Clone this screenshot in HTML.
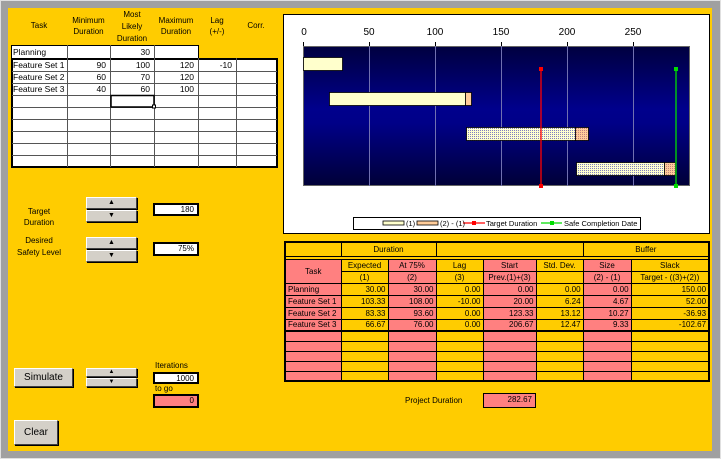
<!DOCTYPE html>
<html><head><style>
*{margin:0;padding:0;box-sizing:border-box}
body{width:721px;height:459px;background:#e0e0e0;position:relative;overflow:hidden;font-family:"Liberation Sans",sans-serif;font-size:8px;color:#000}
.a{position:absolute}
.c{text-align:center}
.r{text-align:right}
table{border-collapse:collapse;position:absolute;table-layout:fixed}
td{font-size:8px;line-height:9px;padding:0 2px;white-space:nowrap;overflow:hidden}
.btn{position:absolute;background:#d4d0c8;border:1px solid;border-color:#fff #404040 #404040 #fff;box-shadow:1px 1px 0 #000;font-size:10px;text-align:center}
.box{position:absolute;background:#fff;border:2px solid #000;text-align:right;font-size:8px;line-height:9px;padding-right:3px}
.p{background:#ff8080}
.e td{height:10px}
.dr{height:12px}
</style></head><body>
<div class="a" style="left:1px;top:1px;width:719px;height:457px;background:#a0a0a0"></div>
<div class="a" style="left:8px;top:8px;width:704px;height:443px;background:#ffcc00"></div>

<div class="a c" style="left:11px;top:21px;width:56px">Task</div>
<div class="a c" style="left:67px;top:15px;width:43px;line-height:11px">Minimum<br>Duration</div>
<div class="a c" style="left:110px;top:9px;width:44px;line-height:12px">Most<br>Likely<br>Duration</div>
<div class="a c" style="left:154px;top:15px;width:44px;line-height:11px">Maximum<br>Duration</div>
<div class="a c" style="left:198px;top:15px;width:38px;line-height:11px">Lag<br>(+/-)</div>
<div class="a c" style="left:236px;top:21px;width:40px">Corr.</div>

<div class="a" style="left:11px;top:45px;width:188px;height:14px;background:#fff;border:1px solid #000"></div>
<div class="a" style="left:11px;top:58px;width:267px;height:110px;background:#fff;border:2px solid #000"></div>
<svg class="a" style="left:0;top:0" width="300" height="180">
<g stroke="#555" stroke-width="1">
<line x1="67.5" y1="45" x2="67.5" y2="167"/><line x1="110.5" y1="45" x2="110.5" y2="167"/><line x1="154.5" y1="45" x2="154.5" y2="167"/><line x1="198.5" y1="58" x2="198.5" y2="167"/><line x1="236.5" y1="58" x2="236.5" y2="167"/>
<line x1="12" y1="71.5" x2="277" y2="71.5"/><line x1="12" y1="83.5" x2="277" y2="83.5"/><line x1="12" y1="95.5" x2="277" y2="95.5"/><line x1="12" y1="107.5" x2="277" y2="107.5"/><line x1="12" y1="119.5" x2="277" y2="119.5"/><line x1="12" y1="131.5" x2="277" y2="131.5"/><line x1="12" y1="143.5" x2="277" y2="143.5"/><line x1="12" y1="155.5" x2="277" y2="155.5"/>
</g>
<rect x="111" y="95.5" width="43" height="11.5" fill="none" stroke="#000" stroke-width="1.5"/>
<rect x="152.5" y="105" width="3" height="3" fill="#fff" stroke="#000"/>
<g font-family="Liberation Sans" font-size="8.5">
<text x="13" y="55">Planning</text><text x="150" y="55" text-anchor="end">30</text>
<text x="13" y="68">Feature Set 1</text><text x="106" y="68" text-anchor="end">90</text><text x="150" y="68" text-anchor="end">100</text><text x="194" y="68" text-anchor="end">120</text><text x="232" y="68" text-anchor="end">-10</text>
<text x="13" y="80">Feature Set 2</text><text x="106" y="80" text-anchor="end">60</text><text x="150" y="80" text-anchor="end">70</text><text x="194" y="80" text-anchor="end">120</text>
<text x="13" y="92">Feature Set 3</text><text x="106" y="92" text-anchor="end">40</text><text x="150" y="92" text-anchor="end">60</text><text x="194" y="92" text-anchor="end">100</text>
</g>
</svg>

<div class="a c" style="left:8px;top:206px;width:62px;line-height:11px">Target<br>Duration</div>
<div class="btn" style="left:86px;top:197px;width:51px;height:12px;font-size:7px;line-height:9px">▲</div>
<div class="btn" style="left:86px;top:210px;width:51px;height:12px;font-size:7px;line-height:10px">▼</div>
<div class="box" style="left:153px;top:203px;width:46px;height:13px">180</div>
<div class="a c" style="left:8px;top:235px;width:62px;line-height:12px">Desired<br>Safety Level</div>
<div class="btn" style="left:86px;top:237px;width:51px;height:12px;font-size:7px;line-height:9px">▲</div>
<div class="btn" style="left:86px;top:250px;width:51px;height:12px;font-size:7px;line-height:10px">▼</div>
<div class="box" style="left:153px;top:242px;width:46px;height:14px;line-height:10px">75%</div>

<div class="btn" style="left:14px;top:368px;width:59px;height:19px;line-height:17px">Simulate</div>
<div class="btn" style="left:86px;top:368px;width:51px;height:9px;font-size:6px;line-height:7px">▲</div>
<div class="btn" style="left:86px;top:378px;width:51px;height:9px;font-size:6px;line-height:7px">▼</div>
<div class="a" style="left:155px;top:361px">Iterations</div>
<div class="box" style="left:153px;top:372px;width:46px;height:12px">1000</div>
<div class="a" style="left:155px;top:384px">to go</div>
<div class="box p" style="left:153px;top:394px;width:46px;height:14px;line-height:10px">0</div>
<div class="btn" style="left:14px;top:420px;width:44px;height:25px;line-height:23px">Clear</div>

<div class="a" style="left:283px;top:14px;width:427px;height:220px;background:#fff;border:1px solid #000"></div>
<div class="a" style="left:303px;top:46px;width:387px;height:140px;border:1px solid #666;background:linear-gradient(#000040,#00008c 45%,#000088 55%,#000038)"></div>
<svg class="a" style="left:0;top:0" width="721" height="240">
<defs><pattern id="d" width="2" height="2" patternUnits="userSpaceOnUse"><rect width="2" height="2" fill="#ffffd0"/><rect width="1" height="1" fill="#8080c0"/></pattern>
<pattern id="d2" width="2" height="2" patternUnits="userSpaceOnUse"><rect width="2" height="2" fill="#ffcc99"/><rect width="1" height="1" fill="#c08080"/></pattern></defs>
<g stroke="#7070b0" stroke-width="1"><line x1="369.5" y1="46" x2="369.5" y2="186"/><line x1="435.5" y1="46" x2="435.5" y2="186"/><line x1="501.5" y1="46" x2="501.5" y2="186"/><line x1="567.5" y1="46" x2="567.5" y2="186"/><line x1="633.5" y1="46" x2="633.5" y2="186"/></g>
<g stroke="#000"><line x1="303.5" y1="42" x2="303.5" y2="46"/><line x1="369.5" y1="42" x2="369.5" y2="46"/><line x1="435.5" y1="42" x2="435.5" y2="46"/><line x1="501.5" y1="42" x2="501.5" y2="46"/><line x1="567.5" y1="42" x2="567.5" y2="46"/><line x1="633.5" y1="42" x2="633.5" y2="46"/></g>
<g font-family="Liberation Sans" font-size="10" text-anchor="middle"><text x="304" y="35">0</text><text x="369" y="35">50</text><text x="435" y="35">100</text><text x="501" y="35">150</text><text x="567" y="35">200</text><text x="633" y="35">250</text></g>
<g stroke="#000" stroke-width="0.8">
<rect x="303.5" y="57.5" width="39" height="13" fill="#ffffcc"/>
<rect x="329.5" y="92.5" width="136" height="13" fill="#ffffcc"/><rect x="465.5" y="92.5" width="6" height="13" fill="#ffcc99"/>
<rect x="466.5" y="127.5" width="109" height="13" fill="url(#d)"/><rect x="575.5" y="127.5" width="13" height="13" fill="url(#d2)"/>
<rect x="576.5" y="162.5" width="88" height="13" fill="url(#d)"/><rect x="664.5" y="162.5" width="11" height="13" fill="url(#d2)"/>
</g>
<line x1="541" y1="69" x2="541" y2="186" stroke="#ff0000" stroke-width="1.3"/>
<rect x="539" y="67" width="4" height="4" fill="#f00"/><rect x="539" y="184" width="4" height="4" fill="#f00"/>
<line x1="676" y1="69" x2="676" y2="186" stroke="#00dd00" stroke-width="1.3"/>
<rect x="674" y="67" width="4" height="4" fill="#0d0"/><rect x="674" y="184" width="4" height="4" fill="#0d0"/>
<rect x="353.5" y="217.5" width="287" height="12" fill="#fff" stroke="#000"/>
<rect x="383" y="221" width="21" height="4" fill="#ffffcc" stroke="#000" stroke-width=".8"/>
<rect x="417" y="221" width="21" height="4" fill="#ffcc99" stroke="#000" stroke-width=".8"/>
<line x1="463" y1="223" x2="485" y2="223" stroke="#f00" stroke-width="1.3"/><rect x="472" y="221" width="4" height="4" fill="#f00"/>
<line x1="541" y1="223" x2="562" y2="223" stroke="#0d0" stroke-width="1.3"/><rect x="550" y="221" width="4" height="4" fill="#0d0"/>
<g font-family="Liberation Sans" font-size="7.5"><text x="406" y="226">(1)</text><text x="440" y="226">(2) - (1)</text><text x="486" y="226">Target Duration</text><text x="564" y="226">Safe Completion Date</text></g>
</svg>

<table style="left:284px;top:241px;width:426px;border:2px solid #000">
<colgroup><col style="width:56px"><col style="width:47px"><col style="width:48px"><col style="width:47px"><col style="width:53px"><col style="width:47px"><col style="width:48px"><col style="width:78px"></colgroup>
<tr style="height:14px"><td style="border-right:1px solid #000"></td><td colspan="2" class="c" style="border-right:1px solid #000">Duration</td><td colspan="3" style="border-right:1px solid #000"></td><td colspan="2" class="c">Buffer</td></tr>
<tr style="height:3px"><td colspan="8" style="border-top:1px solid #000;border-bottom:1px solid #000;line-height:1px;font-size:1px;height:3px">&nbsp;</td></tr>
<tbody style="border-bottom:2px solid #000">
<tr class="dr"><td rowspan="2" class="p c" style="border-right:1px solid #000">Task</td><td class="c" style="border-right:1px solid #000">Expected</td><td class="c p" style="border-right:1px solid #000">At 75%</td><td class="c" style="border-right:1px solid #000">Lag</td><td class="c p" style="border-right:1px solid #000">Start</td><td class="c" style="border-right:1px solid #000">Std. Dev.</td><td class="c p" style="border-right:1px solid #000">Size</td><td class="c">Slack</td></tr>
<tr class="dr" style="border-bottom:1px solid #000"><td class="c" style="border:1px solid #000;border-left:0">(1)</td><td class="c p" style="border:1px solid #000">(2)</td><td class="c" style="border:1px solid #000">(3)</td><td class="c p" style="border:1px solid #000">Prev.(1)+(3)</td><td style="border:1px solid #000"></td><td class="c p" style="border:1px solid #000">(2) - (1)</td><td class="c" style="border-top:1px solid #000">Target - ((3)+(2))</td></tr>
<tr class="dr"><td class="p" style="border-right:1px solid #000">Planning</td><td class="r" style="border-right:1px solid #000">30.00</td><td class="r p" style="border-right:1px solid #000">30.00</td><td class="r" style="border-right:1px solid #000">0.00</td><td class="r p" style="border-right:1px solid #000">0.00</td><td class="r" style="border-right:1px solid #000">0.00</td><td class="r p" style="border-right:1px solid #000">0.00</td><td class="r">150.00</td></tr>
<tr class="dr" style="border-top:1px solid #000"><td class="p" style="border-right:1px solid #000">Feature Set 1</td><td class="r" style="border-right:1px solid #000">103.33</td><td class="r p" style="border-right:1px solid #000">108.00</td><td class="r" style="border-right:1px solid #000">-10.00</td><td class="r p" style="border-right:1px solid #000">20.00</td><td class="r" style="border-right:1px solid #000">6.24</td><td class="r p" style="border-right:1px solid #000">4.67</td><td class="r">52.00</td></tr>
<tr class="dr" style="border-top:1px solid #000"><td class="p" style="border-right:1px solid #000">Feature Set 2</td><td class="r" style="border-right:1px solid #000">83.33</td><td class="r p" style="border-right:1px solid #000">93.60</td><td class="r" style="border-right:1px solid #000">0.00</td><td class="r p" style="border-right:1px solid #000">123.33</td><td class="r" style="border-right:1px solid #000">13.12</td><td class="r p" style="border-right:1px solid #000">10.27</td><td class="r">-36.93</td></tr>
<tr class="dr" style="border-top:1px solid #000"><td class="p" style="border-right:1px solid #000">Feature Set 3</td><td class="r" style="border-right:1px solid #000">66.67</td><td class="r p" style="border-right:1px solid #000">76.00</td><td class="r" style="border-right:1px solid #000">0.00</td><td class="r p" style="border-right:1px solid #000">206.67</td><td class="r" style="border-right:1px solid #000">12.47</td><td class="r p" style="border-right:1px solid #000">9.33</td><td class="r">-102.67</td></tr>
</tbody>
<tr class="e" style="border-bottom:1px solid #000"><td class="p" style="border-right:1px solid #000"></td><td style="border-right:1px solid #000"></td><td class="p" style="border-right:1px solid #000"></td><td style="border-right:1px solid #000"></td><td class="p" style="border-right:1px solid #000"></td><td style="border-right:1px solid #000"></td><td class="p" style="border-right:1px solid #000"></td><td></td></tr>
<tr class="e" style="border-bottom:1px solid #000"><td class="p" style="border-right:1px solid #000"></td><td style="border-right:1px solid #000"></td><td class="p" style="border-right:1px solid #000"></td><td style="border-right:1px solid #000"></td><td class="p" style="border-right:1px solid #000"></td><td style="border-right:1px solid #000"></td><td class="p" style="border-right:1px solid #000"></td><td></td></tr>
<tr class="e" style="border-bottom:1px solid #000"><td class="p" style="border-right:1px solid #000"></td><td style="border-right:1px solid #000"></td><td class="p" style="border-right:1px solid #000"></td><td style="border-right:1px solid #000"></td><td class="p" style="border-right:1px solid #000"></td><td style="border-right:1px solid #000"></td><td class="p" style="border-right:1px solid #000"></td><td></td></tr>
<tr class="e" style="border-bottom:1px solid #000"><td class="p" style="border-right:1px solid #000"></td><td style="border-right:1px solid #000"></td><td class="p" style="border-right:1px solid #000"></td><td style="border-right:1px solid #000"></td><td class="p" style="border-right:1px solid #000"></td><td style="border-right:1px solid #000"></td><td class="p" style="border-right:1px solid #000"></td><td></td></tr>
<tr class="e"><td class="p" style="border-right:1px solid #000"></td><td style="border-right:1px solid #000"></td><td class="p" style="border-right:1px solid #000"></td><td style="border-right:1px solid #000"></td><td class="p" style="border-right:1px solid #000"></td><td style="border-right:1px solid #000"></td><td class="p" style="border-right:1px solid #000"></td><td></td></tr>
</table>

<div class="a" style="left:405px;top:396px">Project Duration</div>
<div class="box p" style="left:483px;top:393px;width:53px;height:15px;line-height:11px;border-width:1.5px">282.67</div>
</body></html>
